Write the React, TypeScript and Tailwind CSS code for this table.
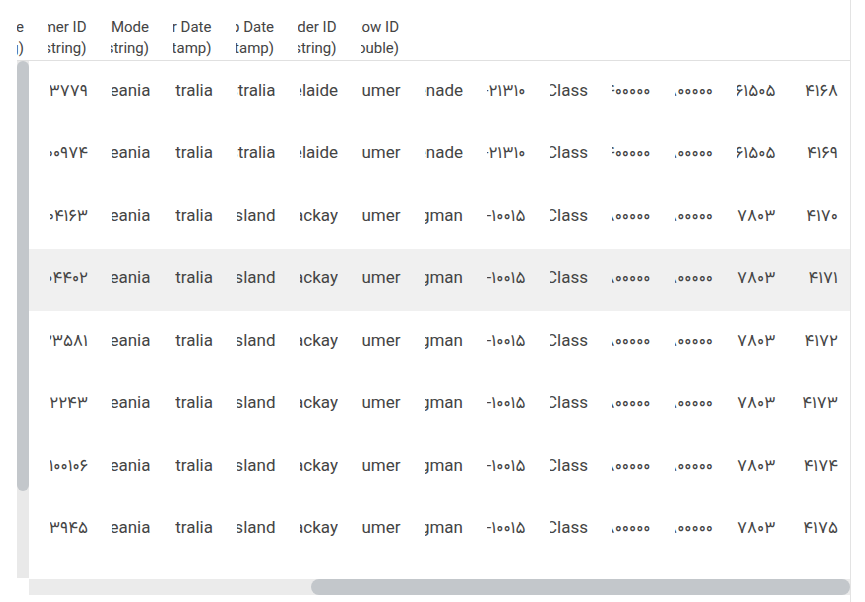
import React from 'react';

const headers: [string, string][] = [
  ['Customer Name', '(string)'],
  ['Customer ID', '(string)'],
  ['Ship Mode', '(string)'],
  ['Order Date', '(timestamp)'],
  ['Ship Date', '(timestamp)'],
  ['Order ID', '(string)'],
  ['Row ID', '(double)'],
];

const first = ['۱۴۳۷۷۹', '۱۰۰۹۷۴', '۱۰۴۱۶۳', '۱۰۴۴۰۲', '۱۲۳۵۸۱', '۱۲۲۲۴۳', '۱۱۰۰۱۰۶', '۱۳۹۴۵'];
const ids = ['۴۱۶۸', '۴۱۶۹', '۴۱۷۰', '۴۱۷۱', '۴۱۷۲', '۴۱۷۳', '۴۱۷۴', '۴۱۷۵'];

const adelaide = ['Oceania', 'Australia', 'South Australia', 'Adelaide', 'Consumer', 'Tamara Grenade', 'TG-۲۱۳۱۰', 'Standard Class', '۱۳۵۶۹۹۸۴۰۰۰۰۰', '۱۳۵۷۳۴۴۸۰۰۰۰۰', '۱۶۱۵۰۵'];
const mackay = ['Oceania', 'Australia', 'Queensland', 'Mackay', 'Consumer', 'Erica Bergman', 'EB-۱۰۰۱۵', 'Standard Class', '۱۳۵۹۰۷۹۸۰۰۰۰۰', '۱۳۵۹۴۲۴۸۰۰۰۰۰', '۱۲۷۸۰۳'];

const rows = first.map((f, i) => [f, ...(i < 2 ? adelaide : mackay), ids[i]]);

// each cell clips its text from the left, like the rtl grid does
const Cell = ({ children }: { children: React.ReactNode }) => (
  <div className="w-[62.5px] shrink-0 px-3">
    <div dir="rtl" className="overflow-hidden whitespace-nowrap">
      {children}
    </div>
  </div>
);

export default function App() {
  return (
    <div className="w-[865px] h-[602px] bg-white overflow-hidden text-[#444] font-['Roboto','Vazirmatn','DejaVu_Sans',sans-serif]">
      <div className="ml-[17px] w-[834px] h-full border-r border-[#e3e3e3] flex flex-col">
        {/* header */}
        <div className="h-[61px] shrink-0 border-b border-[#e0e0e0] overflow-hidden pt-[17px]">
          <div className="flex ml-[-43.5px] text-[15px] leading-[21px]">
            {headers.map(([name, type]) => (
              <Cell key={name}>
                <div>{name}</div>
                <div>{type}</div>
              </Cell>
            ))}
          </div>
        </div>

        {/* body */}
        <div className="flex h-[517px] shrink-0">
          <div className="w-3 shrink-0 bg-[#e9e9e9]">
            <div className="h-[430px] rounded-full bg-[#c3c7cb]" />
          </div>
          <div className="flex-1 overflow-hidden">
            {rows.map((row, i) => (
              <div
                key={i}
                className={`flex justify-end h-[62.5px] pb-1 items-center text-[17px] ${i === 3 ? 'bg-[#f0f0f0]' : ''}`}
              >
                {row.map((v, j) => (
                  <Cell key={j}>{v}</Cell>
                ))}
              </div>
            ))}
          </div>
        </div>

        {/* horizontal scrollbar */}
        <div className="ml-3 mt-px h-4 bg-[#ebebeb] flex justify-end">
          <div className="w-[539px] h-full rounded-full bg-[#c3c7cb]" />
        </div>
      </div>
    </div>
  );
}
